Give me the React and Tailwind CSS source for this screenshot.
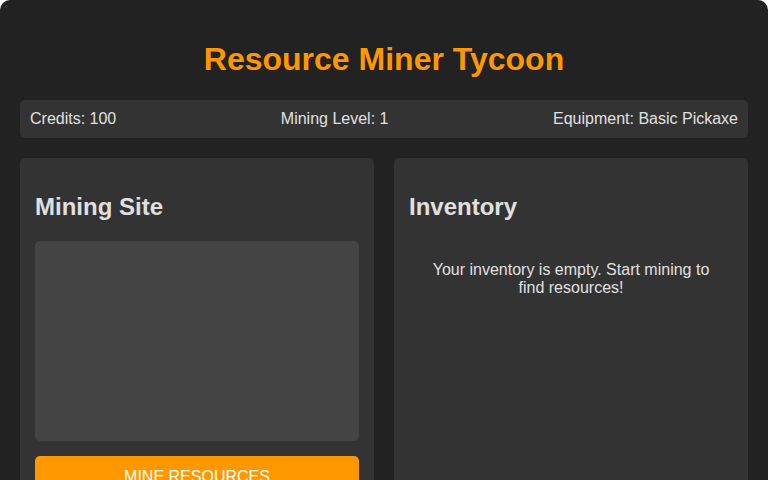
export default function App() {
    return (
        <div className="min-h-screen bg-white" style={{ fontFamily: '"Liberation Sans", Arial, sans-serif' }}>
            <div className="bg-[#222222] rounded-[10px] p-5 min-h-[520px] text-[#e0e0e0]">
                <h1 className="text-center text-[32px] leading-[37px] font-bold text-[#ff9800] mt-[21px] mb-[22px]">
                    Resource Miner Tycoon
                </h1>

                <div className="flex justify-between bg-[#333333] rounded-[5px] p-[10px] text-base leading-[18px]">
                    <span>Credits: 100</span>
                    <span>Mining Level: 1</span>
                    <span>Equipment: Basic Pickaxe</span>
                </div>

                <div className="grid grid-cols-2 gap-5 mt-5">
                    <div className="bg-[#333333] rounded-[5px] p-[15px]">
                        <h2 className="text-2xl leading-[28px] font-bold mt-5 mb-5">Mining Site</h2>
                        <div className="h-[200px] bg-[#444444] rounded-[5px]"></div>
                        <button className="w-full mt-[15px] bg-[#ff9800] text-white rounded-[5px] py-3 text-base leading-[18px] uppercase">
                            Mine Resources
                        </button>
                    </div>

                    <div className="bg-[#333333] rounded-[5px] p-[15px] min-h-[340px]">
                        <h2 className="text-2xl leading-[28px] font-bold mt-5 mb-5">Inventory</h2>
                        <p className="text-center p-5 text-base leading-[18px] text-[#e0e0e0]">
                            Your inventory is empty. Start mining to find resources!
                        </p>
                    </div>
                </div>
            </div>
        </div>
    );
}
